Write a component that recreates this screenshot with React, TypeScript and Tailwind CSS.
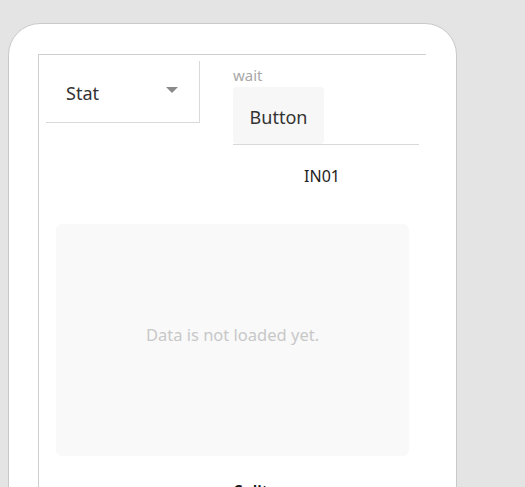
import React from "react";

const font = { fontFamily: '"Noto Sans", "Open Sans", sans-serif' };

function StatSelect() {
  return (
    <div className="flex h-[62px] w-[154px] items-center justify-between border-r border-b border-[#d9d9d9] pl-[20px] pr-[21px]">
      <span className="mt-[3px] text-[18px] text-[#333]">Stat</span>
      <svg width="12" height="6" viewBox="0 0 12 6" className="mt-[-4px]">
        <path d="M0 0 L12 0 L6 6 Z" fill="#8a8a8a" />
      </svg>
    </div>
  );
}

export default function App() {
  return (
    <div className="h-[487px] overflow-hidden bg-[#e4e4e4] pt-[23px] pl-[8px]" style={font}>
      <div className="h-[520px] w-[449px] rounded-[32px] border border-[#c9c9c9] bg-white pt-[30px] pl-[29px]">
        <div className="h-full w-[388px] border-t border-l border-[#cfcfcf] pt-[6px] pl-[7px]">
          <div className="flex">
            <StatSelect />
            <div className="ml-[33px] flex flex-col">
              <div className="mt-[4px] h-[21px] text-[15px] leading-[21px] text-[#a8a8a8]">wait</div>
              <div className="h-[59px] w-[186px] border-b border-[#d9d9d9] pt-[1px]">
                <button className="h-[57px] w-[91px] rounded-[4px] bg-[#f7f7f7] pt-[3px] text-[18px] text-[#333]">
                  Button
                </button>
              </div>
              <div className="mt-[20px] w-[178px] text-center text-[16px] leading-[22px] text-[#222]">IN01</div>
            </div>
          </div>
          <div className="ml-[10px] mt-[37px] flex h-[232px] w-[353px] items-center justify-center rounded-[6px] bg-[#f9f9f9] pb-[10px]">
            <span className="text-[16.5px] text-[#c8c8c8]">Data is not loaded yet.</span>
          </div>
          <div className="ml-[188px] mt-[23px] text-[16px] font-semibold text-[#111]">Split</div>
        </div>
      </div>
    </div>
  );
}
